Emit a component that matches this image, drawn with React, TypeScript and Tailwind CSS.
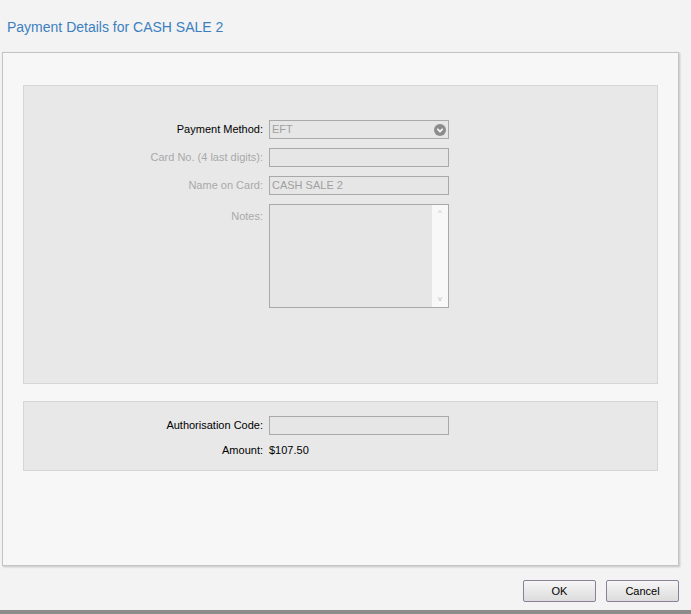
import React from "react";

const F = { fontFamily: '"Liberation Sans", Arial, sans-serif' };

function Row({ label, dim, children, top = false, h = "h-[19px]" }: { label: string; dim?: boolean; children: React.ReactNode; top?: boolean; h?: string }) {
  return (
    <div className={`flex ${top ? "items-start" : "items-center"}`}>
      <div className={`w-[245px] pr-[6px] text-right text-[11px] ${top ? "pt-[4px]" : ""} ${dim ? "text-[#a8a8a8]" : "text-black"}`}>{label}</div>
      <div className={`w-[180px] ${h}`}>{children}</div>
    </div>
  );
}

export default function App() {
  return (
    <div className="relative w-[691px] h-[614px] bg-[#f3f3f3] overflow-hidden" style={F}>
      <div className="pt-[17px] pl-[7px] h-[52px] text-[14px] text-[#3c7fc0]">Payment Details for CASH SALE 2</div>
      <div className="ml-[2px] w-[677px] h-[514px] bg-[#f7f7f7] border border-[#c4c4c4] shadow-[1px_1px_2px_rgba(0,0,0,0.2)] pt-[32px] px-[20px]">
        <div className="h-[299px] bg-[#e8e8e8] border border-[#d6d6d6] pt-[34px] flex flex-col gap-[9px]">
          <Row label="Payment Method:">
            <div className="h-full border border-[#a9a9a9] bg-[#e6e6e6] flex items-center justify-between px-[2px] text-[11px] text-[#a0a0a0]">
              <span>EFT</span>
              <svg width="12" height="12" viewBox="0 0 12 12"><circle cx="6" cy="6" r="6" fill="#8c8c8c" /><path d="M3.3 4.8 L6 7.5 L8.7 4.8" stroke="#fff" strokeWidth="1.6" fill="none" /></svg>
            </div>
          </Row>
          <Row label="Card No. (4 last digits):" dim>
            <div className="h-full border border-[#a9a9a9] bg-[#e6e6e6]" />
          </Row>
          <Row label="Name on Card:" dim>
            <div className="h-full border border-[#a9a9a9] bg-[#e6e6e6] px-[2px] text-[11px] text-[#a0a0a0] leading-[17px]">CASH SALE 2</div>
          </Row>
          <Row label="Notes:" dim top h="h-[104px]">
            <div className="h-full border border-[#a9a9a9] bg-[#e6e6e6] flex justify-end">
              <div className="w-[16px] bg-[#f8f8f8] flex flex-col justify-between items-center text-[8px] text-[#c0c0c0] py-[2px]"><span>^</span><span>v</span></div>
            </div>
          </Row>
        </div>
        <div className="mt-[17px] h-[70px] bg-[#e8e8e8] border border-[#d6d6d6] pt-[14px] flex flex-col gap-[7px]">
          <Row label="Authorisation Code:">
            <div className="h-full border border-[#a9a9a9] bg-[#e6e6e6]" />
          </Row>
          <div className="flex items-center text-[11px]">
            <div className="w-[245px] pr-[6px] text-right">Amount:</div>
            <div>$107.50</div>
          </div>
        </div>
      </div>
      <div className="flex justify-end gap-[10px] pr-[12px] mt-[14px]">
        {["OK", "Cancel"].map((t) => (
          <div key={t} className="w-[73px] h-[22px] border border-[#8a8098] rounded-[2px] bg-gradient-to-b from-[#f6f6f6] to-[#dcdcdc] flex items-center justify-center text-[11px]">{t}</div>
        ))}
      </div>
      <div className="absolute left-0 right-0 top-[610px] h-[4px] bg-[#8c8c8c]" />
    </div>
  );
}
